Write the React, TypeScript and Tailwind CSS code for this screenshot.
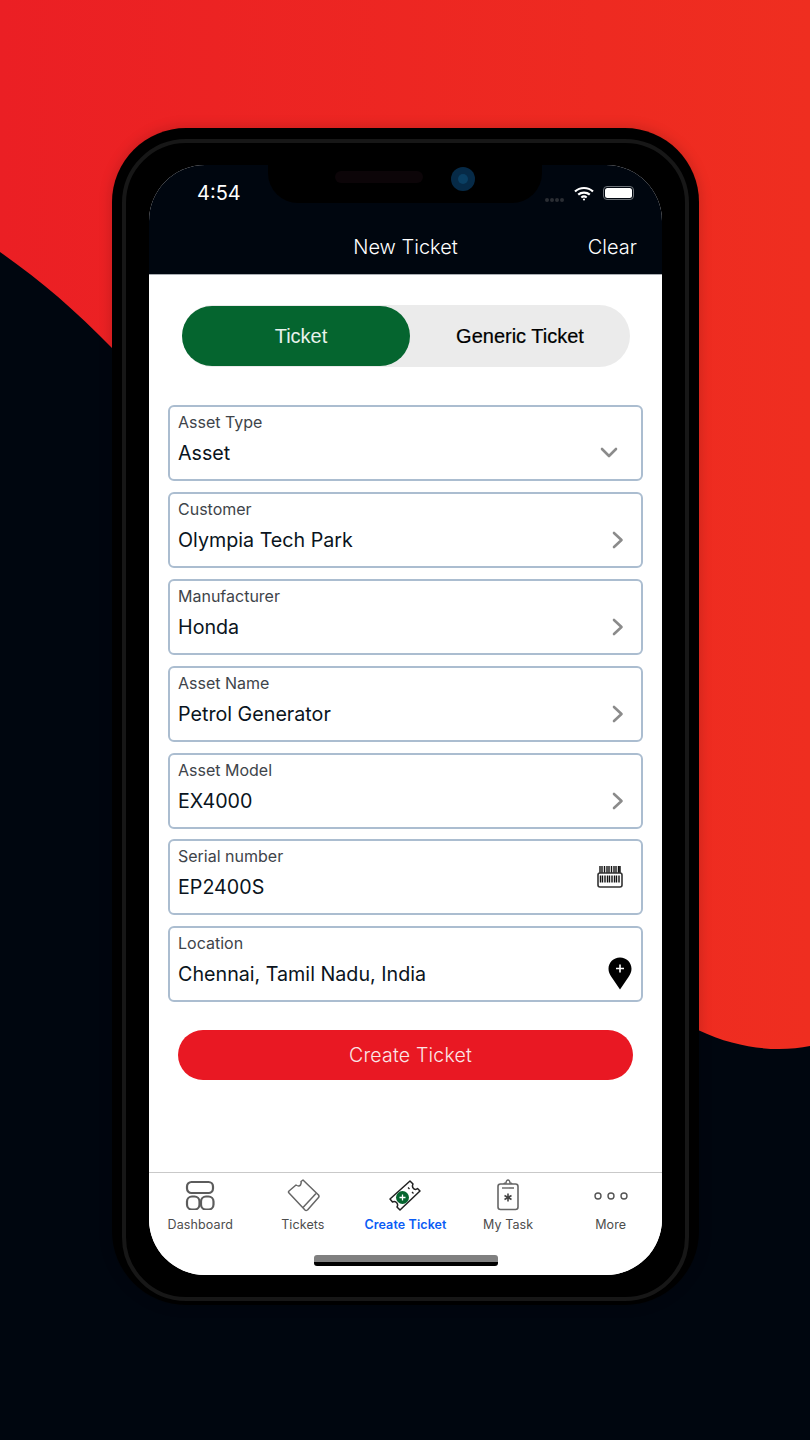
import { ReactNode } from 'react';

const sans = 'font-["Inter","Noto_Sans",sans-serif]';

function ChevronDown() {
  return (
    <svg width="18" height="12" viewBox="0 0 18 12" fill="none">
      <path d="M2 2l7 7 7-7" stroke="#8b8b8b" strokeWidth="2.6" strokeLinecap="round" strokeLinejoin="round" />
    </svg>
  );
}

function ChevronRight() {
  return (
    <svg width="12" height="18" viewBox="0 0 12 18" fill="none">
      <path d="M2 2l7.5 7L2 16" stroke="#8b8b8b" strokeWidth="2.6" strokeLinecap="round" strokeLinejoin="round" />
    </svg>
  );
}

function Barcode() {
  return (
    <svg width="26" height="22" viewBox="0 0 26 22" fill="none">
      <path
        d="M3 0v8M5 0v8M7.5 0v8M10 0v8M12 0v8M14.5 0v8M17 0v8M19 0v8M21.5 0v8M23 0v8"
        stroke="#111"
        strokeWidth="1.4"
      />
      <rect x="1" y="7" width="24" height="14" rx="2" fill="#fff" stroke="#333" strokeWidth="1.6" />
      <path
        d="M3.5 9.5v7M5.5 9.5v7M8 9.5v7M10.5 9.5v7M12.5 9.5v7M15 9.5v7M17.5 9.5v7M19.5 9.5v7M22 9.5v7"
        stroke="#111"
        strokeWidth="1.4"
      />
    </svg>
  );
}

function Pin() {
  return (
    <svg width="24" height="33" viewBox="0 0 24 33">
      <path d="M12 0.5C5.4 0.5 0.5 5.6 0.5 11.8c0 3.2 1.2 5.6 3 8.2L12 32.5 20.5 20c1.8-2.6 3-5 3-8.2C23.500 5.600 18.600 0.500 12 0.500z" fill="#000" />
      <path d="M12 7.500v8M8 11.500h8" stroke="#fff" strokeWidth="1.6" />
    </svg>
  );
}

function DashboardIcon() {
  return (
    <svg width="30" height="30" viewBox="0 0 30 30" fill="none" stroke="#5c5c5c" strokeWidth="2.200">
      <rect x="2" y="2" width="26" height="11" rx="4.500" />
      <rect x="2" y="16.500" width="12.500" height="13" rx="5" />
      <rect x="16" y="16.500" width="12.500" height="13" rx="5" />
    </svg>
  );
}

function TicketsIcon() {
  return (
    <svg width="34" height="34" viewBox="0 0 34 34" fill="none" stroke="#666" strokeWidth="1.500" strokeLinejoin="round">
      <path d="M3 13L10 7Q13 9 14.500 7Q15.500 5 15 3.500L17 2L32.500 17Q33.500 18.500 32.500 19.500L21.500 32Q20 33 19 32L3 15Q2 14 3 13Z" />
      <path d="M17 29.500L30 15.500" />
    </svg>
  );
}

function CreateTicketIcon() {
  return (
    <svg width="32" height="32" viewBox="0 0 32 32" fill="none">
      <path
        d="M1 20L21 2L24 5Q22.500 8 25 10Q27 11 28.500 9.500L31 12L11 31L8 28Q9.500 25.500 7.500 23.500Q5.500 22 3.500 23Z"
        stroke="#222"
        strokeWidth="1.500"
        strokeLinejoin="round"
      />
      <path d="M19 8.500l1.500 1.500M23 13l1.500 1.500" stroke="#222" strokeWidth="1.300" />
      <circle cx="13.500" cy="18.500" r="6.500" fill="#05652f" />
      <path d="M13.500 15.500v6M10.500 18.500h6" stroke="#fff" strokeWidth="1.300" />
    </svg>
  );
}

function TaskIcon() {
  return (
    <svg width="24" height="32" viewBox="0 0 24 32" fill="none" stroke="#666">
      <rect x="2" y="5" width="20" height="25.500" rx="2.500" strokeWidth="1.600" />
      <path d="M8 5c0-1 1-1 2-1 0-1.500 1-3 2-3s2 1.500 2 3c1 0 2 0 2 1" strokeWidth="1.400" />
      <path d="M6 9h12" strokeWidth="1.400" />
      <path d="M12 14.500v8M8.500 16.500l7 4M15.500 16.500l-7 4" stroke="#444" strokeWidth="1.600" />
    </svg>
  );
}

function MoreIcon() {
  return (
    <svg width="34" height="10" viewBox="0 0 34 10" fill="none" stroke="#555" strokeWidth="1.400" className="mt-[1px]">
      <circle cx="4" cy="5" r="3" />
      <circle cx="17" cy="5" r="3" />
      <circle cx="30" cy="5" r="3" />
    </svg>
  );
}

function Field({ label, value, icon }: { label: string; value: string; icon: ReactNode }) {
  return (
    <div className="flex h-[76px] items-center justify-between rounded-[6px] border-2 border-[#abbdd0] pl-[8px]">
      <div className="flex flex-col self-start pt-[5px]">
        <span className="text-[16px] leading-[20px] text-[#3e444a]">{label}</span>
        <span className="mt-[9px] text-[19.7px] leading-[24px] text-[#0a1420]">{value}</span>
      </div>
      <div className="flex w-[60px] justify-center">{icon}</div>
    </div>
  );
}

const chevron = <div className="ml-[14px] mt-[20px]"><ChevronRight /></div>;

const fields = [
  { label: 'Asset Type', value: 'Asset', icon: <div className="mr-[4px] mt-[20px]"><ChevronDown /></div> },
  { label: 'Customer', value: 'Olympia Tech Park', icon: chevron },
  { label: 'Manufacturer', value: 'Honda', icon: chevron },
  { label: 'Asset Name', value: 'Petrol Generator', icon: chevron },
  { label: 'Asset Model', value: 'EX4000', icon: chevron },
  { label: 'Serial number', value: 'EP2400S', icon: <div className="mr-[2px]"><Barcode /></div> },
  { label: 'Location', value: 'Chennai, Tamil Nadu, India', icon: <div className="ml-[18px] mt-[19px]"><Pin /></div> },
];

const tabs = [
  { label: 'Dashboard', icon: <DashboardIcon /> },
  { label: 'Tickets', icon: <TicketsIcon /> },
  { label: 'Create Ticket', icon: <CreateTicketIcon />, active: true },
  { label: 'My Task', icon: <TaskIcon /> },
  { label: 'More', icon: <MoreIcon /> },
];

export default function App() {
  return (
    <div className={`relative h-[1440px] w-[810px] overflow-hidden bg-[#00060f] ${sans}`}>
      <svg className="absolute inset-0" width="810" height="1440" viewBox="0 0 810 1440">
        <defs>
          <linearGradient id="red" x1="0" x2="1" y1="0" y2="0">
            <stop offset="0" stopColor="#eb1f24" />
            <stop offset="1" stopColor="#ef2e20" />
          </linearGradient>
        </defs>
        <path d="M0 0H810V1046C780 1052 740 1050 698 1030L698 1000L400 800L112 348C75 310 40 280 0 252Z" fill="url(#red)" />
      </svg>

      <div className="relative ml-[112px] mt-[128px] h-[1177px] w-[587px] rounded-[74px] bg-black px-[10px] pb-[4px] pt-[11px] shadow-[0_0_14px_rgba(0,0,0,0.18)]">
        <div className="h-full rounded-[64px] border-[4px] border-[#171717] px-[23px] pb-[22px] pt-[22px]">
          <div className="relative flex h-full flex-col overflow-hidden rounded-[56px] bg-white">
            <div className="relative h-[110px] shrink-0 border-b border-[#a9adb2] bg-[#00060f]">
              <div className="absolute left-[119px] top-0 flex h-[38px] w-[274px] items-start rounded-b-[30px] bg-black pl-[67px] pt-[6px]">
                <div className="h-[12px] w-[88px] rounded-full bg-[#0c0508]" />
                <div className="-mt-[4px] ml-[28px] flex h-[24px] w-[24px] items-center justify-center rounded-full bg-[#062a47]">
                  <div className="h-[10px] w-[10px] rounded-full bg-[#0a3f63]" />
                </div>
              </div>
              <span className="absolute left-[48px] top-[16px] text-[20px] leading-[24px] text-white">4:54</span>
              <div className="absolute left-[396px] top-[20px] flex items-center gap-[9px]">
                <div className="mt-[13px] flex gap-[1.500px]">
                  <div className="h-[3.500px] w-[3.500px] rounded-full bg-[#2a2e33]" />
                  <div className="h-[3.500px] w-[3.500px] rounded-full bg-[#2a2e33]" />
                  <div className="h-[3.500px] w-[3.500px] rounded-full bg-[#2a2e33]" />
                  <div className="h-[3.500px] w-[3.500px] rounded-full bg-[#2a2e33]" />
                </div>
                <svg width="20" height="15" viewBox="0 0 20 15" fill="none" stroke="#fff" strokeWidth="2.200" className="ml-[1px]">
                  <path d="M1 5.500C6 .8 14 .8 19 5.500" />
                  <path d="M4.200 8.700C7.500 5.800 12.500 5.800 15.800 8.700" />
                  <path d="M7.300 11.500C8.800 10.300 11.200 10.300 12.700 11.500" />
                  <circle cx="10" cy="13.500" r="1.100" fill="#fff" stroke="none" />
                </svg>
                <div className="flex h-[14px] w-[31px] items-center rounded-[4px] border border-[#6d7278] p-[1px]">
                  <div className="h-full w-full rounded-[2.500px] bg-white" />
                </div>
              </div>
              <div className="absolute inset-x-0 top-[70px] text-center text-[20px] font-light leading-[24px] text-white">New Ticket</div>
              <span className="absolute right-[25px] top-[70px] text-[20px] font-light leading-[24px] text-white">Clear</span>
            </div>

            <div className="min-h-0 flex-1 px-[19px]">
              <div className='ml-[14px] mt-[30px] flex h-[62px] w-[448px] items-center rounded-full bg-[#ebebeb] font-["Liberation_Sans",sans-serif] text-[20px]'>
                <div className="flex h-[60px] w-[228px] items-center justify-center rounded-full bg-[#05652f] pl-[10px] text-[#e8f2ec]">Ticket</div>
                <div className="flex-1 text-center text-black [-webkit-text-stroke:0.2px_black]">Generic Ticket</div>
              </div>

              <div className="mt-[38px] flex flex-col gap-[10.900px]">
                {fields.map((f) => (
                  <Field key={f.label} label={f.label} value={f.value} icon={f.icon} />
                ))}
              </div>

              <div className="ml-[10px] mt-[28px] flex h-[50px] w-[455px] items-center justify-center rounded-full bg-[#e91823] pl-[10px] pt-[1px] text-[19.500px] font-light tracking-[0.2px] text-[#fbe6e7]">
                Create Ticket
              </div>
            </div>

            <div className="h-[103px] shrink-0 border-t border-[#c9c9c9] bg-white">
              <div className="grid h-[60px] grid-cols-5">
                {tabs.map((t) => (
                  <div key={t.label} className="flex flex-col items-center">
                    <div className="flex h-[44px] items-center justify-center">{t.icon}</div>
                    <span className={`mt-[1px] text-[12.500px] leading-[14px] tracking-[0.1px] ${t.active ? 'font-semibold text-[#0a5cf5]' : 'text-[#4d4d4d]'}`}>
                      {t.label}
                    </span>
                  </div>
                ))}
              </div>
              <div className="mx-auto mt-[22px] flex h-[11px] w-[184px] flex-col overflow-hidden rounded-[3px]">
                <div className="h-[7px] bg-[#808080]" />
                <div className="h-[4px] bg-black" />
              </div>
            </div>
          </div>
        </div>
      </div>
    </div>
  );
}
